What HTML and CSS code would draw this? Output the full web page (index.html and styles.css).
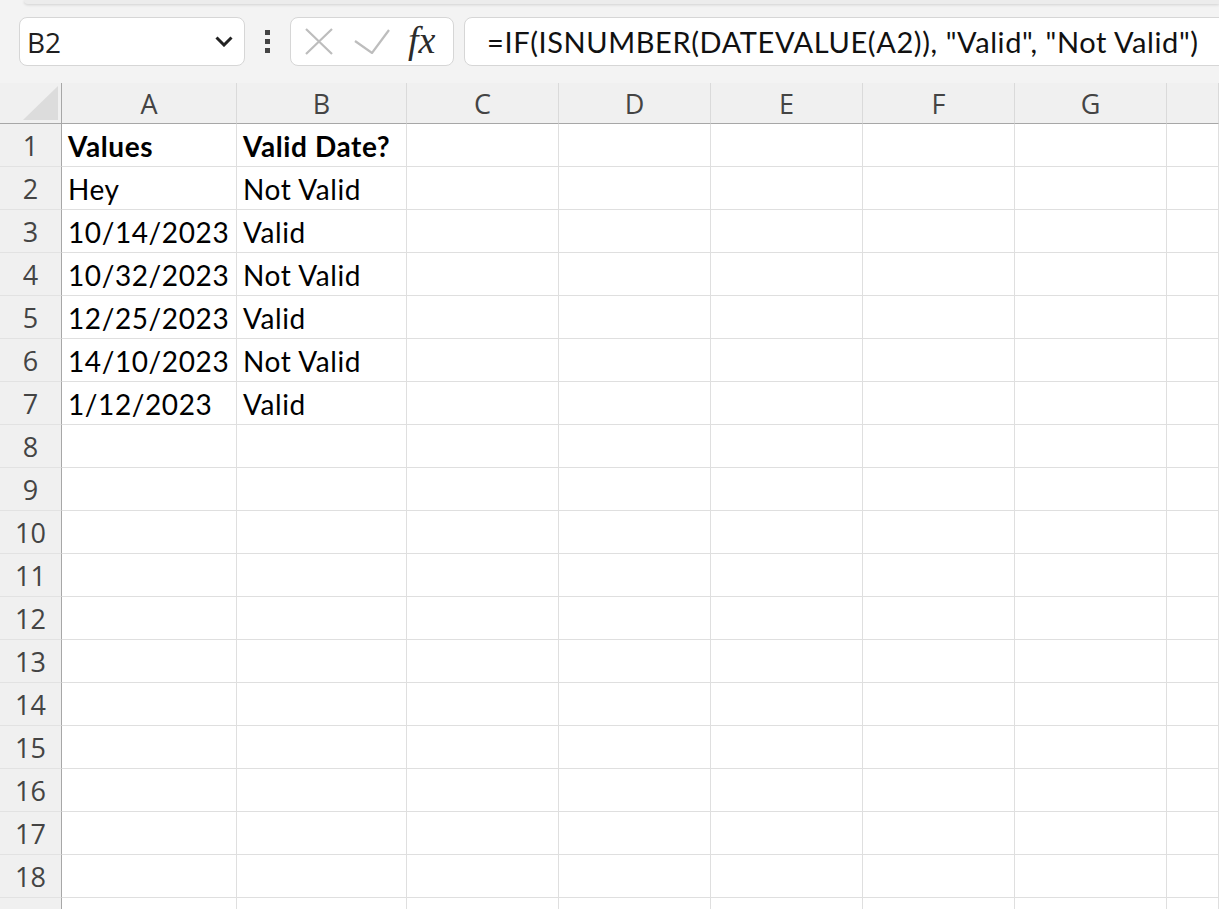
FILE: index.html
```html
<!DOCTYPE html>
<html lang="en">
<head>
    <meta charset="UTF-8">
    <meta name="viewport" content="width=device-width, initial-scale=1.0">
    <title>Book1 - Excel</title>
    <link rel="stylesheet" href="styles.css">
</head>
<body>
    <div class="ribbon-edge"></div>

    <div class="formula-bar">
        <div class="name-box">
            <span>B2</span>
            <svg class="chevron" width="18" height="11" viewBox="0 0 18 11">
                <polyline points="1.5,1.5 9,9 16.5,1.5" fill="none" stroke="#222" stroke-width="3"/>
            </svg>
        </div>
        <div class="kebab"><i></i><i></i><i></i></div>
        <div class="fx-box">
            <svg width="28" height="27" viewBox="0 0 28 27">
                <path d="M1 1 L27 26 M27 1 L1 26" stroke="#bdbdbd" stroke-width="2.2" fill="none"/>
            </svg>
            <svg width="36" height="25" viewBox="0 0 36 25">
                <path d="M1 12 L18 24 L35 1" stroke="#bdbdbd" stroke-width="2.2" fill="none"/>
            </svg>
            <span class="fx">fx</span>
        </div>
        <div class="formula-input">=IF(ISNUMBER(DATEVALUE(A2)), "Valid", "Not Valid")</div>
    </div>

    <div class="sheet">
        <div class="row head">
            <div class="corner"><span class="tri"></span></div>
            <div class="col">A</div><div class="col">B</div><div class="col">C</div><div class="col">D</div>
            <div class="col">E</div><div class="col">F</div><div class="col">G</div><div class="col"></div>
        </div>
        <div class="row">
            <div class="num">1</div>
            <div class="c b">Values</div><div class="c b">Valid Date?</div>
            <div class="c"></div><div class="c"></div><div class="c"></div><div class="c"></div><div class="c"></div><div class="c"></div>
        </div>
        <div class="row">
            <div class="num">2</div>
            <div class="c">Hey</div><div class="c">Not Valid</div>
            <div class="c"></div><div class="c"></div><div class="c"></div><div class="c"></div><div class="c"></div><div class="c"></div>
        </div>
        <div class="row">
            <div class="num">3</div>
            <div class="c">10/14/2023</div><div class="c">Valid</div>
            <div class="c"></div><div class="c"></div><div class="c"></div><div class="c"></div><div class="c"></div><div class="c"></div>
        </div>
        <div class="row">
            <div class="num">4</div>
            <div class="c">10/32/2023</div><div class="c">Not Valid</div>
            <div class="c"></div><div class="c"></div><div class="c"></div><div class="c"></div><div class="c"></div><div class="c"></div>
        </div>
        <div class="row">
            <div class="num">5</div>
            <div class="c">12/25/2023</div><div class="c">Valid</div>
            <div class="c"></div><div class="c"></div><div class="c"></div><div class="c"></div><div class="c"></div><div class="c"></div>
        </div>
        <div class="row">
            <div class="num">6</div>
            <div class="c">14/10/2023</div><div class="c">Not Valid</div>
            <div class="c"></div><div class="c"></div><div class="c"></div><div class="c"></div><div class="c"></div><div class="c"></div>
        </div>
        <div class="row">
            <div class="num">7</div>
            <div class="c">1/12/2023</div><div class="c">Valid</div>
            <div class="c"></div><div class="c"></div><div class="c"></div><div class="c"></div><div class="c"></div><div class="c"></div>
        </div>
        <div class="row">
            <div class="num">8</div>
            <div class="c"></div><div class="c"></div><div class="c"></div><div class="c"></div><div class="c"></div><div class="c"></div><div class="c"></div><div class="c"></div>
        </div>
        <div class="row">
            <div class="num">9</div>
            <div class="c"></div><div class="c"></div><div class="c"></div><div class="c"></div><div class="c"></div><div class="c"></div><div class="c"></div><div class="c"></div>
        </div>
        <div class="row">
            <div class="num">10</div>
            <div class="c"></div><div class="c"></div><div class="c"></div><div class="c"></div><div class="c"></div><div class="c"></div><div class="c"></div><div class="c"></div>
        </div>
        <div class="row">
            <div class="num">11</div>
            <div class="c"></div><div class="c"></div><div class="c"></div><div class="c"></div><div class="c"></div><div class="c"></div><div class="c"></div><div class="c"></div>
        </div>
        <div class="row">
            <div class="num">12</div>
            <div class="c"></div><div class="c"></div><div class="c"></div><div class="c"></div><div class="c"></div><div class="c"></div><div class="c"></div><div class="c"></div>
        </div>
        <div class="row">
            <div class="num">13</div>
            <div class="c"></div><div class="c"></div><div class="c"></div><div class="c"></div><div class="c"></div><div class="c"></div><div class="c"></div><div class="c"></div>
        </div>
        <div class="row">
            <div class="num">14</div>
            <div class="c"></div><div class="c"></div><div class="c"></div><div class="c"></div><div class="c"></div><div class="c"></div><div class="c"></div><div class="c"></div>
        </div>
        <div class="row">
            <div class="num">15</div>
            <div class="c"></div><div class="c"></div><div class="c"></div><div class="c"></div><div class="c"></div><div class="c"></div><div class="c"></div><div class="c"></div>
        </div>
        <div class="row">
            <div class="num">16</div>
            <div class="c"></div><div class="c"></div><div class="c"></div><div class="c"></div><div class="c"></div><div class="c"></div><div class="c"></div><div class="c"></div>
        </div>
        <div class="row">
            <div class="num">17</div>
            <div class="c"></div><div class="c"></div><div class="c"></div><div class="c"></div><div class="c"></div><div class="c"></div><div class="c"></div><div class="c"></div>
        </div>
        <div class="row">
            <div class="num">18</div>
            <div class="c"></div><div class="c"></div><div class="c"></div><div class="c"></div><div class="c"></div><div class="c"></div><div class="c"></div><div class="c"></div>
        </div>
        <div class="row">
            <div class="num"></div>
            <div class="c"></div><div class="c"></div><div class="c"></div><div class="c"></div><div class="c"></div><div class="c"></div><div class="c"></div><div class="c"></div>
        </div>
    </div>
</body>
</html>
```

FILE: styles.css
```css
* {
    margin: 0;
    padding: 0;
    box-sizing: border-box;
}

body {
    background: #f3f3f3;
    font-family: 'Open Sans', 'Noto Sans', sans-serif;
    color: #222;
    overflow: hidden;
    height: 909px;
}

.ribbon-edge {
    height: 4px;
    margin-left: 24px;
    background: #ececec;
    border-bottom-left-radius: 6px;
    box-shadow: 0 1px 3px rgba(0, 0, 0, 0.14);
}

/* formula bar */

.formula-bar {
    display: flex;
    align-items: center;
    height: 49px;
    margin-top: 13px;
    padding-left: 19px;
}

.name-box,
.fx-box,
.formula-input {
    height: 49px;
    background: #fff;
    border: 1px solid #d6d6d6;
    border-radius: 8px;
    display: flex;
    align-items: center;
}

.name-box {
    width: 226px;
    padding: 0 11px 0 7px;
    justify-content: space-between;
    font-size: 28px;
    color: #1f1f1f;
}

.kebab {
    width: 45px;
    display: flex;
    flex-direction: column;
    align-items: center;
    gap: 4px;
}

.kebab i {
    width: 5px;
    height: 5px;
    background: #444;
}

.fx-box {
    width: 164px;
    padding: 0 10px 0 14px;
    gap: 22px;
}

.fx-box svg:nth-of-type(2) {
    margin-left: -1px;
}

.fx {
    font-family: 'Liberation Serif', 'DejaVu Serif', serif;
    font-style: italic;
    font-size: 38px;
    color: #2b2b2b;
    margin-left: -4px;
    margin-top: -4px;
}

.formula-input {
    flex: 1;
    margin-left: 10px;
    margin-right: -12px;
    padding-left: 22px;
    font-family: 'Lato', 'Liberation Sans', sans-serif;
    font-size: 29px;
    letter-spacing: 0.6px;
    color: #111;
    white-space: nowrap;
}

/* sheet */

.sheet {
    margin-top: 17px;
}

.row {
    display: grid;
    grid-template-columns: 62px 175px 170px 152px 152px 152px 152px 152px 1fr;
    height: 43px;
}

.row.head {
    height: 41px;
}

.corner,
.col,
.num {
    background: #f0f0f0;
    color: #444;
    font-size: 27px;
}

.corner {
    border-right: 1px solid #a7a7a7;
    border-bottom: 1px solid #a7a7a7;
    display: flex;
    align-items: flex-end;
    justify-content: flex-end;
    padding: 0 3px 3px 0;
}

.tri {
    width: 0;
    height: 0;
    border-left: 35px solid transparent;
    border-bottom: 34px solid #dcdcdc;
}

.col {
    text-align: center;
    line-height: 39px;
    padding-top: 1px;
    border-right: 1px solid #dadada;
    border-bottom: 1px solid #a7a7a7;
}

.num {
    text-align: center;
    line-height: 40px;
    padding-top: 2px;
    border-right: 1px solid #a7a7a7;
    border-bottom: 1px solid #e2e2e2;
}

.c {
    background: #fff;
    border-right: 1px solid #dfdfdf;
    border-bottom: 1px solid #dfdfdf;
    font-family: 'Lato', 'Liberation Sans', sans-serif;
    font-size: 28px;
    letter-spacing: 0.6px;
    color: #000;
    line-height: 36px;
    padding: 4px 0 0 6px;
    white-space: nowrap;
    overflow: hidden;
}

.c.b {
    font-weight: 700;
}
```
